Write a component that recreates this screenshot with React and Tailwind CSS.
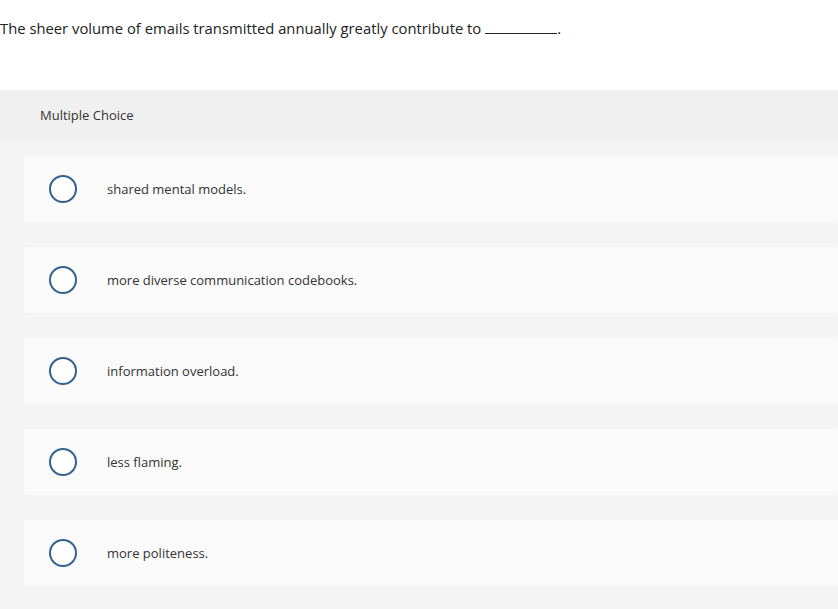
const options = [
  "shared mental models.",
  "more diverse communication codebooks.",
  "information overload.",
  "less flaming.",
  "more politeness.",
];

export default function App() {
  return (
    <div className="min-h-[609px] w-[838px] overflow-hidden bg-white font-['Open_Sans',sans-serif] text-[#333]">
      <p className="pt-[17px] h-[90px] text-[14.8px] leading-[22px] text-[#222]">
        The sheer volume of emails transmitted annually greatly contribute to{" "}
        <span className="inline-block w-[72px] border-b border-[#222] align-baseline"></span>.
      </p>
      <div className="flex h-[50px] items-center bg-[#f0f0f0] pl-10 text-[13px] pt-px">Multiple Choice</div>
      <div className="flex flex-col gap-[25px] bg-[#f4f4f4] pl-6 pt-4 pb-[23px]">
        {options.map((opt) => (
          <label key={opt} className="flex h-[66px] items-center rounded-[3px] bg-[#fafafa] pl-[25px]">
            <span className="h-7 w-7 shrink-0 rounded-full border-2 border-[#32628f] bg-white"></span>
            <span className="ml-[30px] pt-0.5 text-[13px]">{opt}</span>
          </label>
        ))}
      </div>
    </div>
  );
}
